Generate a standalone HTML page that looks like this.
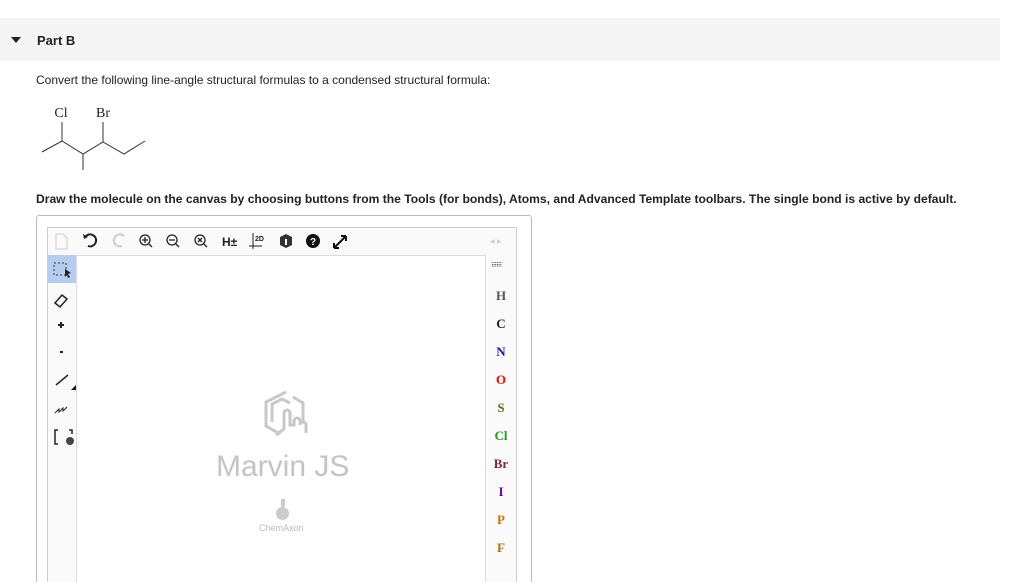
<!DOCTYPE html><html style="height:582px;overflow:hidden"><head><style>
body{margin:0;width:1024px;height:582px;background:#fff;font-family:"Liberation Sans",sans-serif;position:relative;overflow:hidden}
.a{position:absolute}
.el{position:absolute;left:486px;width:30px;text-align:center;font-family:"Liberation Serif",serif;font-weight:bold;font-size:13px}
</style></head><body>
<div class="a" style="left:0;top:18px;width:1000px;height:43px;background:#f5f5f5"></div>
<div class="a" style="left:11px;top:37px;width:0;height:0;border-left:5px solid transparent;border-right:5px solid transparent;border-top:6px solid #222"></div>
<div class="a" style="left:37px;top:33px;font-size:13px;font-weight:bold;color:#222">Part B</div>
<div class="a" style="left:36px;top:73px;font-size:12px;color:#222">Convert the following line-angle structural formulas to a condensed structural formula:</div>
<svg class="a" style="left:0;top:0" width="200" height="180">
<polyline points="42,152 62,141 83,154 103,142 124,154 145,141" fill="none" stroke="#333" stroke-width="1"/>
<line x1="62" y1="141" x2="62" y2="122" stroke="#333"/><line x1="103" y1="142" x2="103" y2="122" stroke="#333"/><line x1="83" y1="154" x2="83" y2="170" stroke="#333"/>
<text x="61" y="117" text-anchor="middle" font-family="Liberation Serif" font-size="14" fill="#222">Cl</text>
<text x="103" y="117" text-anchor="middle" font-family="Liberation Serif" font-size="14" fill="#222">Br</text>
</svg>
<div class="a" style="left:36px;top:192px;font-size:12.1px;font-weight:bold;color:#222;white-space:nowrap">Draw the molecule on the canvas by choosing buttons from the Tools (for bonds), Atoms, and Advanced Template toolbars. The single bond is active by default.</div>
<div class="a" style="left:36px;top:215px;width:494px;height:380px;border:1px solid #bbb;border-radius:3px"></div>
<div class="a" style="left:47px;top:227px;width:468px;height:360px;border:1px solid #ccc;background:#fafafa"></div>
<div class="a" style="left:76px;top:255px;width:408px;height:340px;background:#fff;border:1px solid #ddd"></div>
<div class="a" style="left:48px;top:255px;width:28px;height:28px;background:#b5cdf0"></div>
<svg class="a" style="left:0;top:225px" width="360" height="32" font-family="Liberation Sans" font-weight="bold">
<path d="M56 9h7l4 4v11h-11z" fill="none" stroke="#ccc"/>
<path d="M86 11a6 6 0 1 1 2 10" fill="none" stroke="#222" stroke-width="2"/><path d="M83 9l1 5 4-2z" fill="#222"/>
<path d="M124 11a6 6 0 1 0 -2 10" fill="none" stroke="#ccc" stroke-width="2"/>
<circle cx="145" cy="15" r="5" fill="none" stroke="#222" stroke-width="1.3"/><path d="M142 15h6M145 12v6M149 19l3 3" stroke="#222" stroke-width="1.3"/>
<circle cx="172" cy="15" r="5" fill="none" stroke="#222" stroke-width="1.3"/><path d="M169 15h6M176 19l3 3" stroke="#222" stroke-width="1.3"/>
<circle cx="200" cy="15" r="5" fill="none" stroke="#222" stroke-width="1.3"/><path d="M198 13l4 4M202 13l-4 4M204 19l3 3" stroke="#222" stroke-width="1.3"/>
<text x="222" y="21" font-size="12" fill="#222">H±</text>
<path d="M253 8v16M249 21h13" stroke="#222"/><text x="255" y="16" font-size="7" fill="#222">2D</text>
<path d="M286 9l6 3v8l-6 3-6-3v-8z" fill="#333"/><rect x="285" y="14" width="2" height="6" fill="#fff"/>
<circle cx="313" cy="16" r="7" fill="#111"/><text x="313" y="20" font-size="10" fill="#fff" text-anchor="middle">?</text>
<path d="M334 23l12-12M334 23v-5M334 23h5M346 11h-5M346 11v5" stroke="#111" stroke-width="2"/>
</svg>
<div class="a" style="left:490px;top:236px;font-size:9px;color:#ccc">◂ ▸</div>
<svg class="a" style="left:48px;top:255px" width="30" height="200">
<rect x="6" y="8" width="12" height="12" fill="none" stroke="#333" stroke-dasharray="2 2"/><path d="M17 14l6 4-3 1 2 3-2 1-1-3-2 2z" fill="#222"/>
<path d="M7 48l7-8 5 4-7 8z" fill="none" stroke="#222" stroke-width="1.5"/>
<path d="M10 70h6M13 67v6" stroke="#222" stroke-width="2"/>
<path d="M12 97h3" stroke="#222" stroke-width="2"/>
<path d="M8 130l12-10" stroke="#222" stroke-width="1.5"/><path d="M28 130v5h-5z" fill="#111"/>
<path d="M7 158l4-4v3l4-4v3l4-4" fill="none" stroke="#222"/>
<path d="M10 175h-3v14h3M21 175h3v4" fill="none" stroke="#222" stroke-width="1.5"/><ellipse cx="22" cy="186" rx="4" ry="4" fill="#444"/>
</svg>
<div class="a" style="left:491px;top:262px;width:20px;height:10px;font-size:6px;color:#333;letter-spacing:-1px">⠿⠿⠿</div>
<div class="el" style="top:288px;color:#555">H</div>
<div class="el" style="top:316px;color:#222">C</div>
<div class="el" style="top:344px;color:#1a1aa8">N</div>
<div class="el" style="top:372px;color:#f00">O</div>
<div class="el" style="top:400px;color:#6b6b1a">S</div>
<div class="el" style="top:428px;color:#1a9e1a">Cl</div>
<div class="el" style="top:456px;color:#7a2a2a">Br</div>
<div class="el" style="top:484px;color:#6a0aa0">I</div>
<div class="el" style="top:512px;color:#c07a00">P</div>
<div class="el" style="top:540px;color:#b07010">F</div>
<svg class="a" style="left:250px;top:385px" width="70" height="60">
<path d="M36 7l-20 10v24l14 8M40 18l-8-4-10 5v18" fill="none" stroke="#c8c8c8" stroke-width="3"/>
<path d="M26 50l8-6v-16a3 3 0 0 1 6 0v12h4v-4a3 3 0 0 1 6 0v4a3 3 0 0 1 6 0v8" fill="none" stroke="#c8c8c8" stroke-width="3"/>
<path d="M43 12l10 6v18" fill="none" stroke="#c8c8c8" stroke-width="3"/>
</svg>
<div class="a" style="left:216px;top:450px;font-size:30px;color:#c4c4c4">Marvin JS</div>
<div class="a" style="left:276px;top:499px;width:13px;height:24px"><div style="width:4px;height:8px;margin:0 auto;background:#ccc"></div><div style="width:13px;height:13px;border-radius:50%;background:#ccc"></div></div>
<div class="a" style="left:259px;top:523px;font-size:9px;color:#bbb">ChemAxon</div>
</body></html>
